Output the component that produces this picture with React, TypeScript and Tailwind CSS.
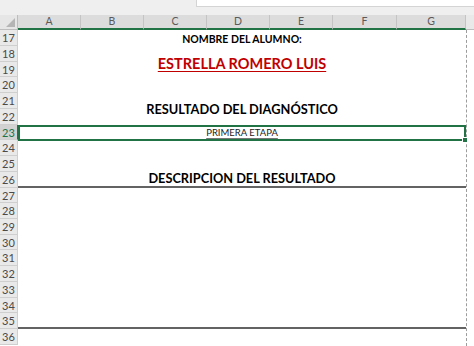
import React from "react";

// row heights for rows 17..36 (approx 15.75px each)
const rowHeights = [16, 16, 15, 16, 16, 16, 15, 16, 16, 16, 15, 16, 16, 15, 16, 16, 16, 15, 16, 16];

const columns = [
  { label: "A", w: 63 },
  { label: "B", w: 63 },
  { label: "C", w: 63 },
  { label: "D", w: 63 },
  { label: "E", w: 63 },
  { label: "F", w: 64 },
  { label: "G", w: 69 },
];

const sum = (from: number, to: number) =>
  rowHeights.slice(from, to + 1).reduce((a, b) => a + b, 0);

const font = { fontFamily: "Lato, 'Liberation Sans', sans-serif" };

export default function App() {
  return (
    <div
      className="w-[474px] h-[346px] overflow-hidden bg-white select-none"
      style={font}
    >
      {/* formula bar strip */}
      <div className="flex h-[15px] bg-[#efefef]">
        <div className="w-[196px]" />
        <div className="flex-1 h-[7px] bg-white border-l border-b border-[#d4d4d4]" />
      </div>

      {/* column headers */}
      <div className="flex h-[15px]">
        <div className="relative w-[18px] bg-[#e6e6e6] border-r border-b border-[#bdbdbd]">
          <div className="absolute right-[2px] bottom-[2px] w-0 h-0 border-l-[9px] border-l-transparent border-b-[9px] border-b-[#b5b5b5]" />
        </div>
        {columns.map((c) => (
          <div
            key={c.label}
            style={{ width: c.w }}
            className="flex items-center justify-center bg-[#dcdcdc] border-r border-[#c4c4c4] border-b-2 border-b-[#217346] text-[10.5px] text-[#5a5a5a] leading-none"
          >
            {c.label}
          </div>
        ))}
        <div className="flex-1 bg-[#e9e9e9] border-b border-[#bdbdbd]" />
      </div>

      {/* body */}
      <div className="flex">
        {/* row headers */}
        <div className="w-[18px] flex flex-col">
          {rowHeights.map((h, i) => {
            const n = 17 + i;
            const sel = n === 23;
            return (
              <div
                key={n}
                style={{ height: h }}
                className={`flex items-center justify-center border-b border-r border-[#cfcfcf] text-[11px] leading-none ${
                  sel ? "bg-[#d2d2d2] text-[#217346] border-r-[#217346]" : "bg-[#e9e9e9] text-[#4a4a4a]"
                }`}
              >
                {n}
              </div>
            );
          })}
        </div>

        {/* sheet A..G */}
        <div className="w-[448px] flex flex-col text-black">
          <div style={{ height: sum(0, 0) }} className="flex items-end justify-center">
            <span className="text-[10.5px] font-bold leading-none pb-[2px]">NOMBRE DEL ALUMNO:</span>
          </div>
          <div style={{ height: sum(1, 2) }} className="flex items-end justify-center pb-[6px]">
            <span className="text-[14.5px] font-bold leading-none text-[#c00000] underline underline-offset-[2px]">
              ESTRELLA ROMERO LUIS
            </span>
          </div>
          <div style={{ height: sum(3, 3) }} />
          <div style={{ height: sum(4, 5) }} className="flex items-end justify-center pb-[9px]">
            <span className="text-[12.8px] font-bold leading-none">RESULTADO DEL DIAGNÓSTICO</span>
          </div>
          <div
            style={{ height: sum(6, 6) + 1 }}
            className="relative -mb-[1px] flex items-center justify-center border-2 border-[#217346]"
          >
            <span className="text-[9.5px] leading-none text-[#222] underline underline-offset-[2px] decoration-[#777]">
              PRIMERA ETAPA
            </span>
            <div className="absolute -right-[4px] -bottom-[4px] w-[6px] h-[6px] bg-[#217346] border border-white" />
          </div>
          <div style={{ height: sum(7, 7) }} />
          <div
            style={{ height: sum(8, 9) }}
            className="flex items-end justify-center border-b-2 border-[#636363] pb-[1px]"
          >
            <span className="text-[12.75px] font-bold leading-none">DESCRIPCION DEL RESULTADO</span>
          </div>
          <div style={{ height: sum(10, 18) }} className="border-b-2 border-[#636363]" />
          <div style={{ height: sum(19, 19) }} />
        </div>

        {/* column H, beyond page break */}
        <div className="flex-1 h-[316px] border-l border-dashed border-[#9c9c9c]" />
      </div>
    </div>
  );
}
